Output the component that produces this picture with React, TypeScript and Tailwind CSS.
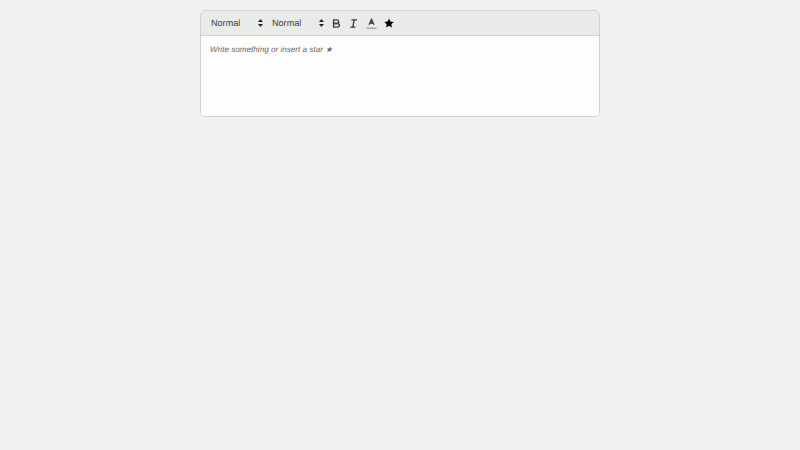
import React from 'react';

function Picker() {
  return (
    <div className="w-[61px] h-[24px] flex items-center justify-between pr-[9px] text-[9.1px] text-[#444]">
      <span className="pt-px">Normal</span>
      <svg width="5" height="8" viewBox="0 0 5 8" fill="#222">
        <path d="M2.5 0 L5 3 H0 Z" />
        <path d="M2.5 8 L5 5 H0 Z" />
      </svg>
    </div>
  );
}

function ToolButton({ children }: { children: React.ReactNode }) {
  return (
    <button className="w-[17.3px] h-[24px] flex items-center justify-center">
      {children}
    </button>
  );
}

export default function App() {
  return (
    <main className="min-h-screen bg-[#f2f0f0] pt-[10px] font-['Liberation_Sans',sans-serif] antialiased [text-rendering:geometricPrecision]">
      <div className="w-[400px] mx-auto border border-[#d2d2d2] rounded-[5px] overflow-hidden">
        {/* Toolbar */}
        <div className="h-[25px] bg-[#e9ebe9] border-b border-[#d2d2d2] flex items-center pl-[10px]">
          <Picker />
          <Picker />
          <div className="flex items-center -ml-[5px]">
            <ToolButton>
              <svg width="13" height="13" viewBox="0 0 18 18" fill="none" stroke="#444" strokeWidth="2">
                <path d="M5,4H9.5A2.5,2.5,0,0,1,12,6.5v0A2.5,2.5,0,0,1,9.5,9H5A0,0,0,0,1,5,9V4A0,0,0,0,1,5,4Z" />
                <path d="M5,9h5.5A2.5,2.5,0,0,1,13,11.5v0A2.5,2.5,0,0,1,10.5,14H5a0,0,0,0,1,0,0V9A0,0,0,0,1,5,9Z" />
              </svg>
            </ToolButton>
            <ToolButton>
              <svg width="13" height="13" viewBox="0 0 18 18" fill="none" stroke="#444" strokeWidth="2" strokeLinecap="round">
                <line x1="7" x2="13" y1="4" y2="4" />
                <line x1="5" x2="11" y1="14" y2="14" />
                <line x1="8" x2="10" y1="14" y2="4" />
              </svg>
            </ToolButton>
            <ToolButton>
              <svg width="13" height="13" viewBox="0 0 18 18" fill="none" stroke="#444" strokeWidth="2">
                <line x1="2" x2="16" y1="15.5" y2="15.5" stroke="#aaa" />
                <polyline points="5.5 11 9 3 12.5 11" strokeWidth="1.5" />
                <path d="M6.4 9 H11.6 L9 3 Z" fill="#444" strokeWidth="1" />
              </svg>
            </ToolButton>
            <ToolButton>
              <svg width="10" height="10" viewBox="0 0 24 24" fill="#000">
                <path d="M12 1l3.4 7.3 7.9 1-5.8 5.4 1.5 7.9L12 18.7l-7 3.9 1.5-7.9L.7 9.3l7.9-1z" />
              </svg>
            </ToolButton>
          </div>
        </div>
        {/* Editor */}
        <div className="h-[80px] bg-[#fffcfc] px-[9px] pt-[7.5px] text-[8.15px] leading-[12px] italic text-[#666]">
          Write something or insert a star ★
        </div>
      </div>
    </main>
  );
}
